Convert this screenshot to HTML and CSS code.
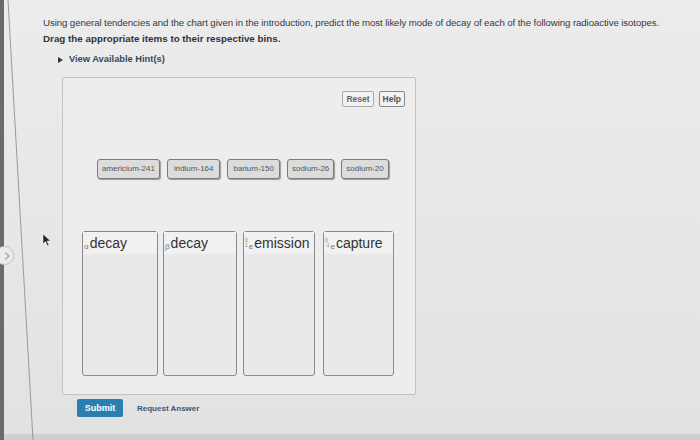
FILE: index.html
```html
<!DOCTYPE html>
<html>
<head>
<meta charset="utf-8">
<link rel="stylesheet" href="styles.css">
</head>
<body>
<div class="screen">
  <div class="edge"></div>
  <div class="page">
    <p class="intro">Using general tendencies and the chart given in the introduction, predict the most likely mode of decay of each of the following radioactive isotopes.</p>
    <p class="instr">Drag the appropriate items to their respective bins.</p>
    <div class="hint"><span class="tri"></span>View Available Hint(s)</div>
    <div class="box">
      <div class="tools">
        <button class="tbtn reset">Reset</button>
        <button class="tbtn">Help</button>
      </div>
      <div class="tokens">
        <span class="token">americium-241</span>
        <span class="token">iridium-164</span>
        <span class="token">barium-150</span>
        <span class="token">sodium-26</span>
        <span class="token">sodium-20</span>
      </div>
      <div class="bins">
        <div class="bin"><div class="blabel"><span class="sym">α</span>decay</div></div>
        <div class="bin"><div class="blabel"><span class="sym">β</span>decay</div></div>
        <div class="bin"><div class="blabel"><span class="nuc"><span>0</span><span>1</span></span><span class="sym">e</span>emission</div></div>
        <div class="bin"><div class="blabel"><span class="nuc"><span>0</span><span>-1</span></span><span class="sym">e</span>capture</div></div>
      </div>
    </div>
    <div class="actions">
      <button class="submit">Submit</button>
      <span class="req">Request Answer</span>
    </div>
  </div>
  <div class="bottom"></div>
  <svg class="sideline" width="40" height="440" viewBox="0 0 40 440"><line x1="8" y1="0" x2="33" y2="440" stroke="#9a9a9a" stroke-width="1"/></svg>
  <div class="chev"><svg width="10" height="10" viewBox="0 0 10 10"><path d="M3 1.5 L7 5 L3 8.5" fill="none" stroke="#a8a8a8" stroke-width="1.3"/></svg></div>
  <svg class="cursor" width="10" height="14" viewBox="0 0 10 14"><path d="M1 1 L1 11 L3.5 8.5 L5.5 13 L7 12.3 L5 8 L8.5 8 Z" fill="#222" stroke="#eee" stroke-width="0.6"/></svg>
</div>
</body>
</html>
```
FILE: styles.css
```css
html, body {
  margin: 0;
  padding: 0;
}
body {
  width: 700px;
  height: 440px;
  overflow: hidden;
  font-family: "Liberation Sans", Arial, sans-serif;
  color: #333;
}
.screen {
  position: relative;
  width: 700px;
  height: 440px;
  display: flex;
  flex-direction: column;
  background: linear-gradient(180deg, #ececec 0%, #e6e6e6 60%, #e2e2e2 100%);
}
.edge {
  position: absolute;
  left: 0;
  top: 0;
  width: 4px;
  height: 440px;
  background: #6a6a6a;
}
.page {
  flex: 1;
  padding: 17px 0 0 43px;
}
.intro {
  margin: 0;
  font-size: 9.7px;
  line-height: 11px;
  color: #3a3a3a;
  letter-spacing: -0.1px;
}
.instr {
  margin: 5px 0 0 0;
  font-size: 9.8px;
  line-height: 11px;
  font-weight: bold;
  color: #333;
}
.hint {
  margin: 10px 0 0 15px;
  font-size: 9.3px;
  line-height: 11px;
  font-weight: bold;
  color: #2f4a63;
  display: flex;
  align-items: center;
  gap: 6px;
}
.tri {
  width: 0;
  height: 0;
  border-left: 5px solid #333;
  border-top: 3.5px solid transparent;
  border-bottom: 3.5px solid transparent;
}
.box {
  margin: 12px 0 0 19px;
  width: 354px;
  height: 318px;
  border: 1px solid #c2c2c2;
  border-radius: 2px;
  background: #ededed;
  box-sizing: border-box;
  display: flex;
  flex-direction: column;
}
.tools {
  display: flex;
  justify-content: flex-end;
  gap: 5px;
  padding: 13px 10px 0 0;
}
.tbtn {
  font-family: "Liberation Sans", Arial, sans-serif;
  font-size: 8.5px;
  font-weight: bold;
  color: #555;
  background: #f2f2f2;
  border: 1px solid #888;
  border-radius: 2px;
  padding: 0 3px;
  height: 16px;
  line-height: 14px;
}
.reset {
  color: #666;
  border-color: #aaa;
}
.tokens {
  display: flex;
  gap: 7px;
  padding: 52px 0 0 34px;
}
.token {
  font-size: 8px;
  line-height: 18px;
  height: 18px;
  padding: 0 5px;
  color: #555;
  background: #dcdcdc;
  border: 1px solid #7a7a7a;
  border-radius: 3px;
  box-shadow: 1px 1px 1px #9a9a9a;
}
.token:nth-child(1) { padding: 0 4px; }
.token:nth-child(2) { padding: 0 6px; }
.token:nth-child(4), .token:nth-child(5) { padding: 0 4px; }
.bins {
  display: flex;
  gap: 5px;
  padding: 52px 0 0 19px;
}
.bin {
  width: 76px;
  height: 145px;
  border: 1px solid #8a8a8a;
  border-radius: 3px;
  background: #e9e9e9;
  box-sizing: border-box;
}
.bin:nth-child(2) { width: 74px; }
.bin:nth-child(3) { width: 72px; margin-left: 1px; }
.bin:nth-child(4) { width: 71px; margin-left: 3px; }
.blabel {
  font-size: 14px;
  line-height: 22px;
  height: 22px;
  color: #333;
  background: #f1f1f1;
  display: flex;
  align-items: center;
  padding-left: 1px;
}
.sym {
  font-size: 8px;
  color: #777;
  margin-right: 1px;
  align-self: flex-end;
  line-height: 14px;
}
.nuc {
  display: flex;
  flex-direction: column;
  font-size: 5px;
  line-height: 5px;
  color: #888;
  margin-right: 1px;
}
.actions {
  display: flex;
  align-items: center;
  gap: 14px;
  margin: 4px 0 0 34px;
}
.submit {
  font-family: "Liberation Sans", Arial, sans-serif;
  width: 46px;
  height: 18px;
  background: #2b7fb0;
  color: #fff;
  font-size: 9px;
  font-weight: bold;
  border: none;
  border-radius: 2px;
  padding: 0;
}
.req {
  font-size: 8px;
  font-weight: bold;
  color: #3d5670;
}
.bottom {
  height: 6px;
  background: #cfcfcf;
}
.sideline {
  position: absolute;
  left: 0;
  top: 0;
}
.chev {
  position: absolute;
  left: -5px;
  top: 246px;
  width: 19px;
  height: 19px;
  border-radius: 50%;
  border: 1px solid #c4c4c4;
  background: #ececec;
  display: flex;
  align-items: center;
  justify-content: center;
  padding-left: 4px;
  box-sizing: border-box;
}
.cursor {
  position: absolute;
  left: 42px;
  top: 233px;
}
```
